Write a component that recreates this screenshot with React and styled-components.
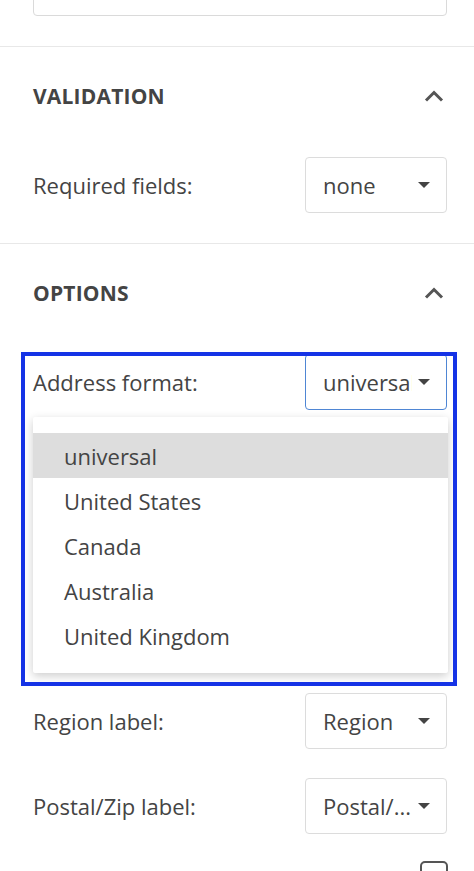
import React from "react";
import styled, { createGlobalStyle } from "styled-components";

const Global = createGlobalStyle`
  html, body { margin: 0; padding: 0; background: #fff; }
  body { font-family: "Open Sans", "Liberation Sans", sans-serif; color: #444; }
  * { box-sizing: border-box; }
`;

const Panel = styled.div`
  width: 474px;
  height: 871px;
  overflow: hidden;
  background: #fff;
`;

const Section = styled.section`
  padding: ${(p) => (p.$top ? "0" : "37px")} 27px 30px 33px;
  border-bottom: 1px solid #e8e8e8;
`;

const TopInput = styled.div`
  height: 56px;
  margin-top: -40px;
  border: 1px solid #dadada;
  border-radius: 4px;
`;

const Header = styled.div`
  display: flex;
  align-items: center;
  justify-content: space-between;
  height: 24px;
  margin-bottom: 49px;
`;

const Title = styled.h2`
  margin: 0;
  font-size: 21px;
  line-height: 24px;
  font-weight: 700;
  letter-spacing: 0.2px;
  color: #444;
  text-transform: uppercase;
`;

const Chevron = styled.svg`
  width: 20px;
  height: 14px;
  margin-right: 3px;
`;

const Rows = styled.div`
  display: flex;
  flex-direction: column;
  gap: 29px;
`;

const Row = styled.div`
  position: relative;
  display: flex;
  align-items: ${(p) => (p.$top ? "flex-start" : "center")};
  justify-content: space-between;
  height: 56px;
  margin-bottom: ${(p) => p.$extra || 0}px;
`;

const Label = styled.span`
  font-size: 22px;
  line-height: 30px;
  color: #444;
`;

const Select = styled.div`
  width: 142px;
  height: 56px;
  display: flex;
  align-items: center;
  gap: 6px;
  padding: 0 16px 0 17px;
  border: 1px solid ${(p) => (p.$focused ? "#4f86d4" : "#dcdcdc")};
  border-radius: 4px;
  background: #fff;
  font-size: 22px;
  color: #444;
`;

const Value = styled.span`
  flex: 1;
  min-width: 0;
  overflow: hidden;
  white-space: nowrap;
`;

const Caret = styled.span`
  flex: none;
  width: 0;
  height: 0;
  border-left: 6px solid transparent;
  border-right: 6px solid transparent;
  border-top: 6px solid #444;
`;

const Menu = styled.ul`
  position: absolute;
  top: 63px;
  left: 0;
  right: -1px;
  margin: 0;
  padding: 16px 0 15px;
  list-style: none;
  background: #fff;
  border-radius: 2px;
  box-shadow: 0 3px 10px rgba(0, 0, 0, 0.2);
  z-index: 2;
`;

const Item = styled.li`
  height: 45px;
  display: flex;
  align-items: center;
  padding-left: 31px;
  font-size: 22px;
  color: #444;
  background: ${(p) => (p.$active ? "#dddddd" : "transparent")};
`;

const Highlight = styled.div`
  position: absolute;
  top: -2px;
  left: -12px;
  width: 436px;
  height: 334px;
  border: 4px solid #1533e6;
  pointer-events: none;
  z-index: 3;
`;

const Checkbox = styled.span`
  width: 28px;
  height: 28px;
  margin-top: -2px;
  margin-left: auto;
  margin-right: -1px;
  border: 2px solid #555;
  border-radius: 5px;
`;

const ChevronUp = () => (
  <Chevron viewBox="0 0 20 14">
    <path d="M2 11.5 L10 3.5 L18 11.5" fill="none" stroke="#555" strokeWidth="3" />
  </Chevron>
);

const SelectBox = ({ value, focused }) => (
  <Select $focused={focused}>
    <Value>{value}</Value>
    <Caret />
  </Select>
);

const options = ["universal", "United States", "Canada", "Australia", "United Kingdom"];

export default function App() {
  return (
    <Panel>
      <Global />
      <Section $top>
        <TopInput />
      </Section>
      <Section>
        <Header>
          <Title>Validation</Title>
          <ChevronUp />
        </Header>
        <Rows>
          <Row>
            <Label>Required fields:</Label>
            <SelectBox value="none" />
          </Row>
        </Rows>
      </Section>
      <Section>
        <Header>
          <Title>Options</Title>
          <ChevronUp />
        </Header>
        <Rows>
          <Row $extra={254}>
            <Label>Address format:</Label>
            <SelectBox value="universal" focused />
            <Menu>
              {options.map((o, i) => (
                <Item key={o} $active={i === 0}>{o}</Item>
              ))}
            </Menu>
            <Highlight />
          </Row>
          <Row>
            <Label>Region label:</Label>
            <SelectBox value="Region" />
          </Row>
          <Row>
            <Label>Postal/Zip label:</Label>
            <SelectBox value="Postal/..." />
          </Row>
          <Row $top>
            <Checkbox />
          </Row>
        </Rows>
      </Section>
    </Panel>
  );
}
